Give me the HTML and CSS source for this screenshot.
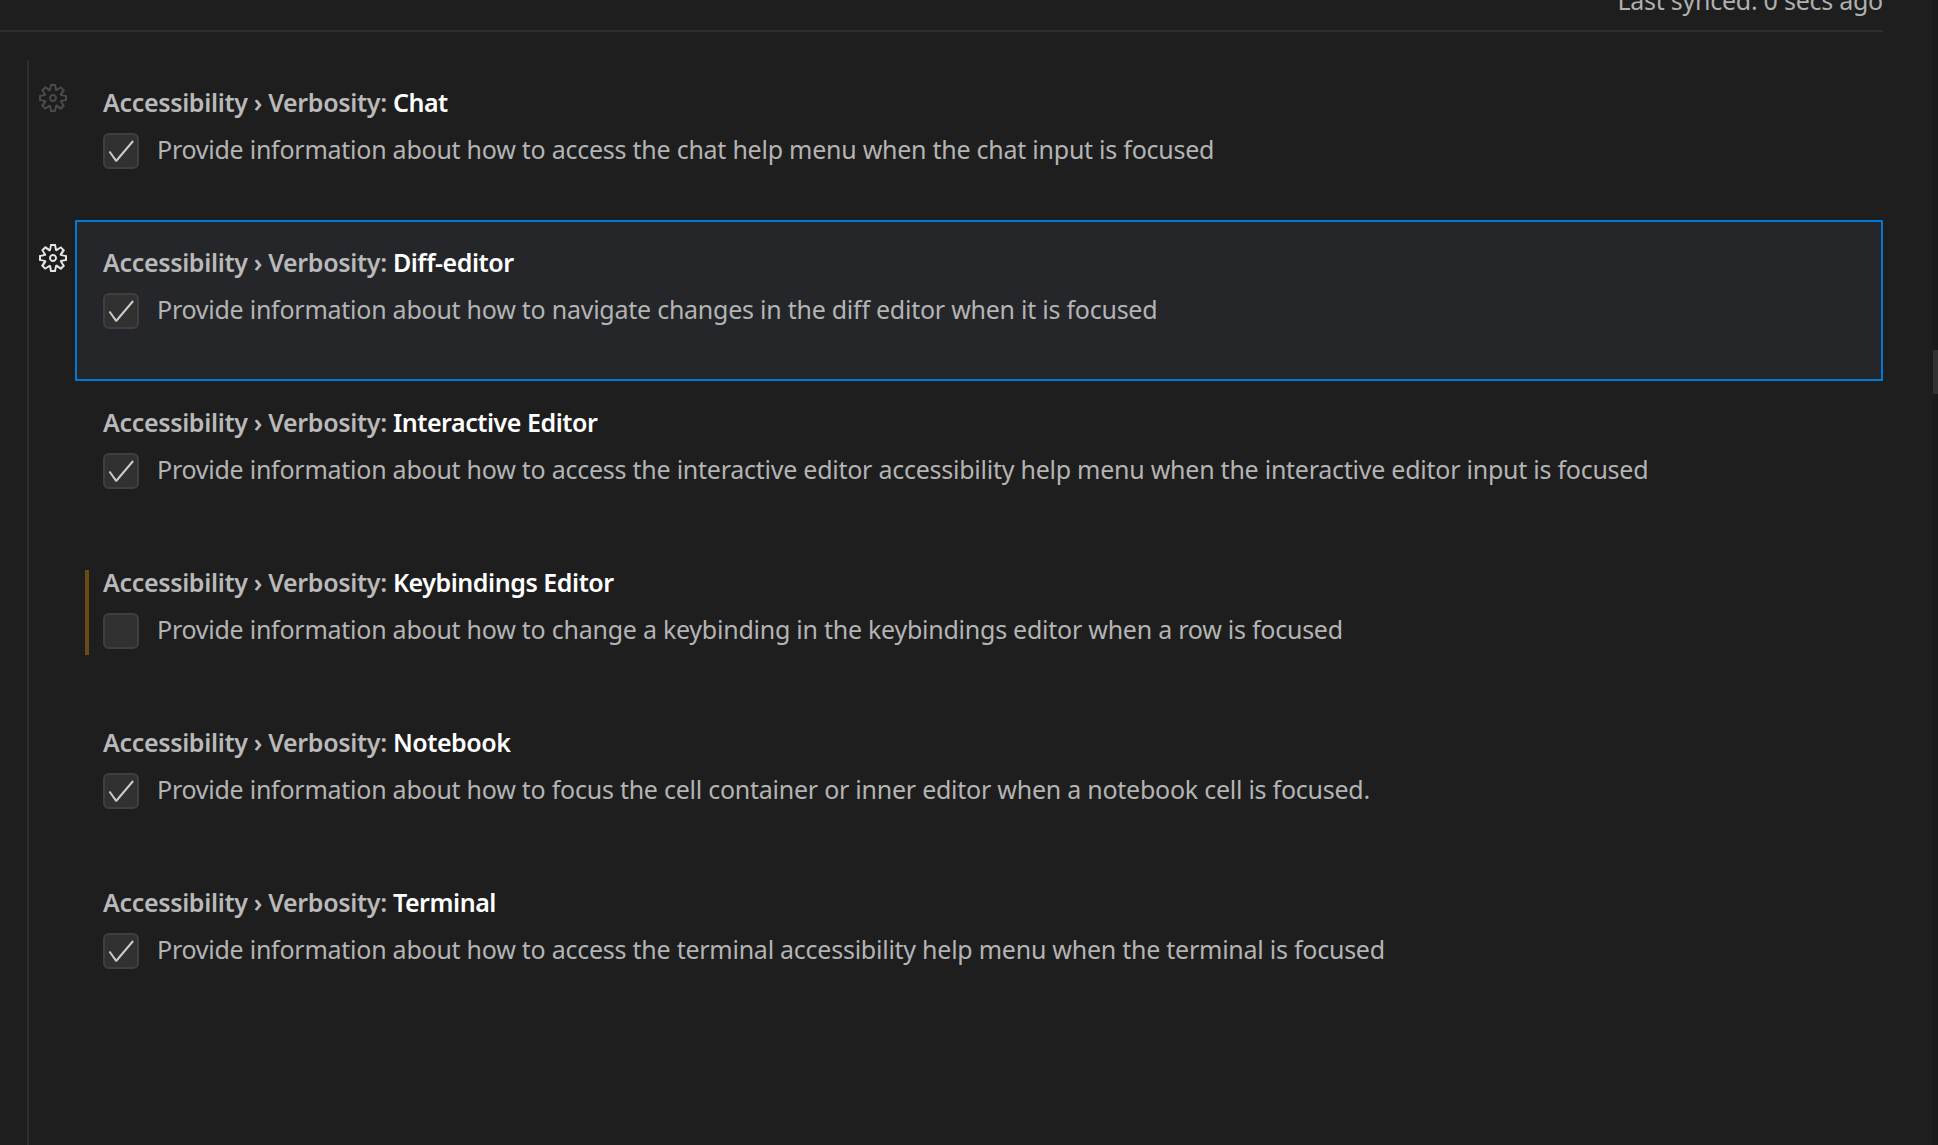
FILE: index.html
```html
<!DOCTYPE html>
<html lang="en">
<head>
<meta charset="utf-8">
<title>Settings</title>
<link rel="stylesheet" href="styles.css">
</head>
<body>
<svg class="defs" width="0" height="0" aria-hidden="true">
  <symbol id="gear" viewBox="0 0 16 16"><path fill-rule="evenodd" clip-rule="evenodd" d="M9.1 4.4L8.6 2H7.4l-.5 2.4-.7.3-2-1.3-.9.8 1.3 2-.2.7-2.4.5v1.2l2.4.5.3.8-1.3 2 .8.8 2-1.3.8.3.4 2.3h1.2l.5-2.4.8-.3 2 1.3.8-.8-1.3-2 .3-.8 2.3-.4V7.4l-2.4-.5-.3-.8 1.3-2-.8-.8-2 1.3-.7-.2zM9.4 1l.5 2.4L12 2.1l2 2-1.4 2.1 2.4.4v2.8l-2.4.5L14 12l-2 2-2.1-1.4-.5 2.4H6.6l-.5-2.4L4 13.9l-2-2 1.4-2.1L1 9.4V6.6l2.4-.5L2.1 4l2-2 2.1 1.4.4-2.4h2.8zm.6 7c0 1.1-.9 2-2 2s-2-.9-2-2 .9-2 2-2 2 .9 2 2zM8 9c.6 0 1-.4 1-1s-.4-1-1-1-1 .4-1 1 .4 1 1 1z"/></symbol>
  <symbol id="check" viewBox="0 0 16 16"><path fill-rule="evenodd" clip-rule="evenodd" d="M14.431 3.323l-8.47 10-.79-.036-3.35-4.77.818-.574 2.978 4.24 8.051-9.506.764.646z"/></symbol>
</svg>
<div class="page">
  <main class="main">
    <header class="header"><span class="synced">Last synced: 0 secs ago</span></header>
    <section class="list">
      <article class="row">
        <div class="gutter"><svg class="gear gear-dim"><use href="#gear"/></svg></div>
        <div class="item">
          <div class="title">Accessibility › Verbosity: <strong>Chat</strong></div>
          <div class="value"><span class="box"><svg class="tick"><use href="#check"/></svg></span><span class="desc">Provide information about how to access the chat help menu when the chat input is focused</span></div>
        </div>
      </article>
      <article class="row">
        <div class="gutter"><svg class="gear"><use href="#gear"/></svg></div>
        <div class="item item-focused">
          <div class="title">Accessibility › Verbosity: <strong>Diff-editor</strong></div>
          <div class="value"><span class="box"><svg class="tick"><use href="#check"/></svg></span><span class="desc">Provide information about how to navigate changes in the diff editor when it is focused</span></div>
        </div>
      </article>
      <article class="row">
        <div class="gutter"></div>
        <div class="item">
          <div class="title">Accessibility › Verbosity: <strong>Interactive Editor</strong></div>
          <div class="value"><span class="box"><svg class="tick"><use href="#check"/></svg></span><span class="desc">Provide information about how to access the interactive editor accessibility help menu when the interactive editor input is focused</span></div>
        </div>
      </article>
      <article class="row">
        <div class="gutter"></div>
        <div class="item item-modified">
          <div class="title">Accessibility › Verbosity: <strong>Keybindings Editor</strong></div>
          <div class="value"><span class="box"></span><span class="desc">Provide information about how to change a keybinding in the keybindings editor when a row is focused</span></div>
        </div>
      </article>
      <article class="row">
        <div class="gutter"></div>
        <div class="item">
          <div class="title">Accessibility › Verbosity: <strong>Notebook</strong></div>
          <div class="value"><span class="box"><svg class="tick"><use href="#check"/></svg></span><span class="desc">Provide information about how to focus the cell container or inner editor when a notebook cell is focused.</span></div>
        </div>
      </article>
      <article class="row">
        <div class="gutter"></div>
        <div class="item">
          <div class="title">Accessibility › Verbosity: <strong>Terminal</strong></div>
          <div class="value"><span class="box"><svg class="tick"><use href="#check"/></svg></span><span class="desc">Provide information about how to access the terminal accessibility help menu when the terminal is focused</span></div>
        </div>
      </article>
    </section>
  </main>
  <aside class="scrollbar"><div class="thumb"></div></aside>
</div>
</body>
</html>
```
FILE: styles.css
```css
* { box-sizing: border-box; }
html, body { margin: 0; height: 100%; }
body {
  background: #1e1e1e;
  color: #cccccc;
  font-family: "Noto Sans", "Open Sans", sans-serif;
  font-size: 25px;
  overflow: hidden;
}
.defs { position: absolute; }
.page { display: flex; height: 1145px; }
.main { flex: 1; min-width: 0; padding-right: 49px; }
.header {
  height: 32px;
  border-bottom: 2px solid #2e2e2e;
  display: flex;
  justify-content: flex-end;
  overflow: hidden;
}
.synced { color: #b0b0b0; line-height: 34px; margin-top: -17px; height: 34px; letter-spacing: -0.25px; white-space: nowrap; }
.list {
  margin: 28px 0 0 27px;
  border-left: 2px solid #2e2e2e;
  height: 1085px;
}
.row { display: flex; height: 160px; }
.gutter { width: 46px; flex: none; padding: 22px 0 0 8px; }
.gear { display: block; width: 32px; height: 32px; fill: #e4e4e4; }
.gear-dim { fill: #4a4a4a; }
.item {
  flex: 1;
  position: relative;
  padding: 20px 26px 0 26px;
  border: 2px solid transparent;
}
.item-focused { background: #252629; border-color: #0078d4; height: 161px; }
.item-modified::before {
  content: "";
  position: absolute;
  left: 8px;
  top: 28px;
  width: 4px;
  height: 85px;
  background: #6a4b16;
}
.title { height: 40px; line-height: 40px; font-weight: 600; color: #b9b9b9; letter-spacing: -0.34px; white-space: nowrap; }
.title strong { font-weight: 600; color: #ffffff; letter-spacing: -0.45px; }
.value { display: flex; align-items: center; gap: 18px; margin-top: 11px; }
.box {
  flex: none;
  width: 36px;
  height: 36px;
  background: #313131;
  border: 2px solid #3f3f3f;
  border-radius: 6px;
  display: flex;
  align-items: center;
  justify-content: center;
}
.tick { width: 32px; height: 32px; fill: #cccccc; }
.desc { color: #b4b4b4; line-height: 32px; padding-bottom: 4px; letter-spacing: -0.25px; white-space: nowrap; }
.scrollbar { width: 6px; flex: none; background: #1a1a1a; padding: 350px 0 0 1px; }
.thumb { height: 44px; background: #333333; }
```
